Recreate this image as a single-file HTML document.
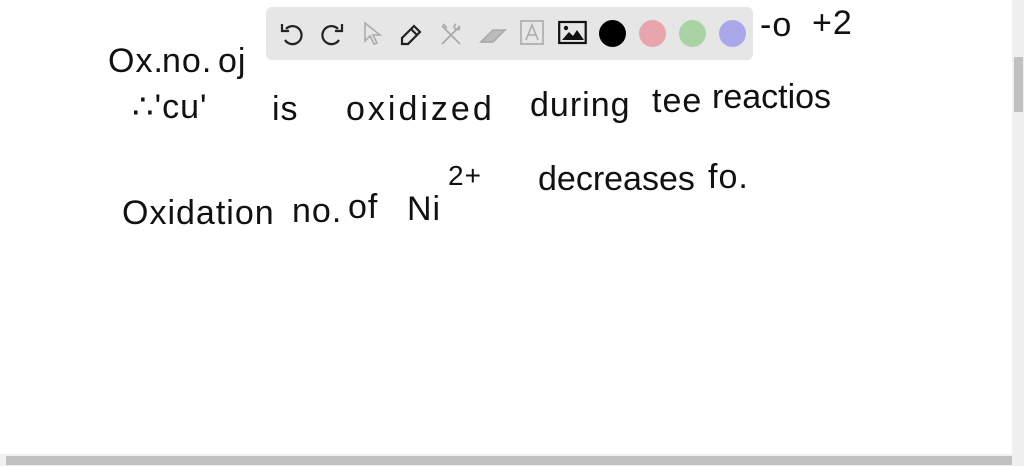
<!DOCTYPE html>
<html><head><meta charset="utf-8"><style>
body{margin:0;width:1024px;height:466px;background:#fff;overflow:hidden;position:relative;font-family:"Liberation Sans",sans-serif}
.w{position:absolute;font-size:34px;color:#111;white-space:nowrap;line-height:1;letter-spacing:1px}
.tb{position:absolute;left:266px;top:7px;width:487px;height:53px;background:#e6e6e6;border-radius:6px}
.ic{position:absolute;top:20px}
.dot{position:absolute;top:20px;width:27px;height:27px;border-radius:50%}
</style></head><body>
<div class="w" style="left:108px;top:44px">Ox.</div>
<div class="w" style="left:162px;top:44px">no.</div>
<div class="w" style="left:218px;top:44px">oj</div>
<div class="w" style="left:760px;top:8px">-o</div>
<div class="w" style="left:812px;top:6px">+2</div>
<div class="w" style="left:132px;top:90px">∴'cu'</div>
<div class="w" style="left:272px;top:92px">is</div>
<div class="w" style="left:346px;top:92px;letter-spacing:3px">oxidized</div>
<div class="w" style="left:530px;top:88px">during</div>
<div class="w" style="left:652px;top:84px">tee</div>
<div class="w" style="left:712px;top:80px;letter-spacing:0">reactios</div>
<div class="w" style="left:122px;top:196px">Oxidation</div>
<div class="w" style="left:292px;top:194px">no.</div>
<div class="w" style="left:348px;top:190px">of</div>
<div class="w" style="left:407px;top:192px">Ni</div>
<div class="w" style="left:448px;top:162px;font-size:28px">2+</div>
<div class="w" style="left:538px;top:162px;letter-spacing:0">decreases</div>
<div class="w" style="left:708px;top:160px">fo.</div>
<div class="tb"></div>
<svg class="ic" style="left:278px" width="28" height="28" viewBox="0 0 28 28" fill="none" stroke="#222" stroke-width="2.2"><path d="M8 9a9 9 0 1 1 -1 11"/><path d="M4 4v7h7"/></svg>
<svg class="ic" style="left:318px" width="28" height="28" viewBox="0 0 28 28" fill="none" stroke="#222" stroke-width="2.2"><path d="M20 9a9 9 0 1 0 1 11"/><path d="M24 4v7h-7"/></svg>
<svg class="ic" style="left:360px" width="24" height="28" viewBox="0 0 24 28" fill="none" stroke="#aaa" stroke-width="1.6"><path d="M5 3l0 18 5-5 4 8 3-1-4-8 7 0z"/></svg>
<svg class="ic" style="left:398px" width="26" height="28" viewBox="0 0 26 28" fill="none" stroke="#222" stroke-width="2.2"><path d="M4 24l0-6 12-12 6 6-12 12z M13 9l6 6"/></svg>
<svg class="ic" style="left:438px" width="26" height="28" viewBox="0 0 26 28" fill="none" stroke="#aaa" stroke-width="1.8"><path d="M4 24l18-18 M4 6l18 18 M5 4l4 4 M18 4a3 3 0 1 0 4 4"/></svg>
<svg class="ic" style="left:478px" width="30" height="28" viewBox="0 0 30 28" fill="none" stroke="#aaa" stroke-width="1.6"><path d="M3 22l12-12h12l-12 12z" fill="#bbb"/><path d="M3 22h12"/></svg>
<svg class="ic" style="left:520px" width="24" height="26" viewBox="0 0 24 26" fill="none" stroke="#aaa" stroke-width="1.6"><rect x="1" y="1" width="22" height="23"/><path d="M6 20l6-15 6 15 M8 15h8"/></svg>
<svg class="ic" style="left:558px" width="29" height="26" viewBox="0 0 29 26"><rect x="1.2" y="2" width="26.5" height="21" fill="none" stroke="#111" stroke-width="2.2"/><path d="M4 20l7-8 4 4 4-6 7 10z" fill="#111"/><circle cx="8" cy="8" r="2.2" fill="#111"/></svg>
<div class="dot" style="left:599px;background:#000"></div>
<div class="dot" style="left:639px;background:#e8a5ad"></div>
<div class="dot" style="left:679px;background:#a9d3a5"></div>
<div class="dot" style="left:719px;background:#aaa8e8"></div>
<div style="position:absolute;left:1012px;top:0;width:12px;height:455px;background:#f0f0f0"></div>
<div style="position:absolute;left:1014px;top:57px;width:9px;height:55px;background:#c0c0c0"></div>
<div style="position:absolute;left:0;top:454px;width:1024px;height:12px;background:#f0f0f0"></div>
<div style="position:absolute;left:6px;top:456px;width:1006px;height:9px;background:#c0c0c0"></div>
</body></html>
